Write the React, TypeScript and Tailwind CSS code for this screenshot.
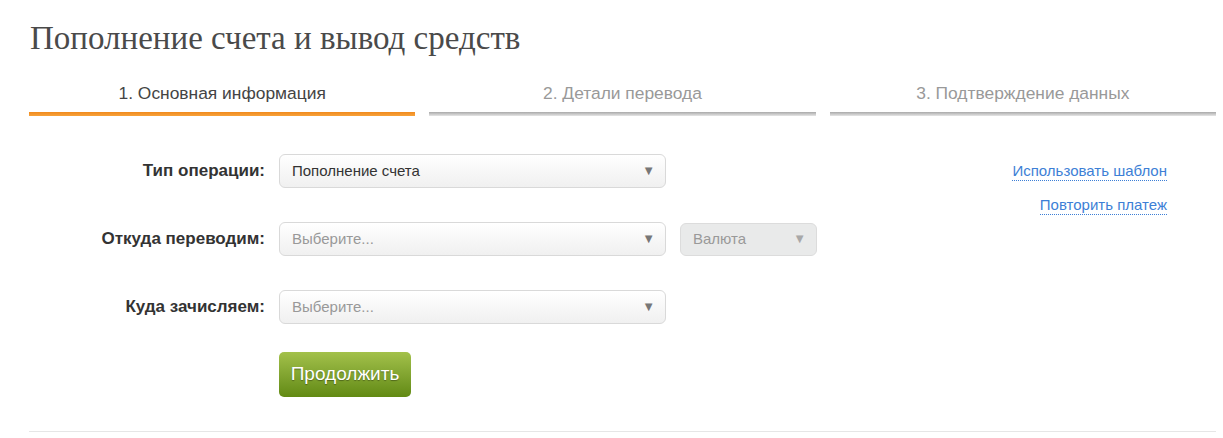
const arrow = (muted?: boolean) => (
  <span className={`text-[13px] ${muted ? 'text-[#a8a8a8]' : 'text-[#777]'}`}>▼</span>
)

function Select({ value, placeholder }: { value?: string; placeholder?: string }) {
  return (
    <div className="w-[387px] h-[34px] flex items-center justify-between pl-3 pr-[10px] border border-[#d9d9d9] rounded-[6px] bg-gradient-to-b from-white to-[#f0f0f0]">
      <span className={`text-[15px] ${value ? 'text-[#333]' : 'text-[#999]'}`}>{value || placeholder}</span>
      {arrow()}
    </div>
  )
}

const tabs = ['1. Основная информация', '2. Детали перевода', '3. Подтверждение данных']

export default function App() {
  return (
    <div className="w-[1223px] h-[438px] bg-white font-['Liberation_Sans',Arial,sans-serif] overflow-hidden">
      <div className="pl-[29px] w-[1216px]">
        <h1 className="pt-[17px] pl-[1px] text-[33px] leading-[42px] text-[#4a4a4a] font-['Liberation_Serif','Times_New_Roman',serif]">
          Пополнение счета и вывод средств
        </h1>

        {/* Steps */}
        <div className="mt-[22px] flex gap-[14px]">
          {tabs.map((t, i) => (
            <div key={t} className="flex-1">
              <div className={`text-center text-[17.4px] leading-[24px] ${i === 0 ? 'text-[#444]' : 'text-[#999]'}`}>{t}</div>
              <div
                className={`mt-[7px] h-[4px] ${
                  i === 0
                    ? 'bg-gradient-to-b from-[#f08a1c] to-[#f7a23a]'
                    : 'bg-gradient-to-b from-[#a9a9a9] to-[#e6e6e6]'
                }`}
              />
            </div>
          ))}
        </div>

        {/* Form */}
        <div className="mt-[38px] flex">
          <div className="flex flex-col">
            <div className="flex items-center h-[34px]">
              <div className="w-[250px] text-right pr-[14px] text-[17px] font-bold text-[#333]">Тип операции:</div>
              <Select value="Пополнение счета" />
            </div>
            <div className="flex items-center h-[34px] mt-[34px]">
              <div className="w-[250px] text-right pr-[14px] text-[17px] font-bold text-[#333]">Откуда переводим:</div>
              <Select placeholder="Выберите..." />
              <div className="ml-[14px] w-[137px] h-[33px] flex items-center justify-between pl-3 pr-[10px] border border-[#dcdcdc] rounded-[6px] bg-[#e9eaea]">
                <span className="text-[15px] text-[#999]">Валюта</span>
                {arrow(true)}
              </div>
            </div>
            <div className="flex items-center h-[34px] mt-[34px]">
              <div className="w-[250px] text-right pr-[14px] text-[17px] font-bold text-[#333]">Куда зачисляем:</div>
              <Select placeholder="Выберите..." />
            </div>
            <div className="flex mt-[28px] pl-[250px]">
              <button className="w-[132px] h-[45px] rounded-[5px] text-white text-[19px] bg-gradient-to-b from-[#a3c14a] to-[#628a12] [text-shadow:0_1px_1px_rgba(0,0,0,0.35)]">
                Продолжить
              </button>
            </div>
          </div>

          <div className="ml-auto mr-[49px] flex flex-col items-end pt-[8px] gap-[15px] text-[15px] text-[#3d7fd6]">
            <a className="border-b border-dotted border-[#3d7fd6] leading-[18px]">Использовать шаблон</a>
            <a className="border-b border-dotted border-[#3d7fd6] leading-[18px]">Повторить платеж</a>
          </div>
        </div>

        <div className="mt-[34px] h-px bg-[#e6e6e6]" />
      </div>
    </div>
  )
}
